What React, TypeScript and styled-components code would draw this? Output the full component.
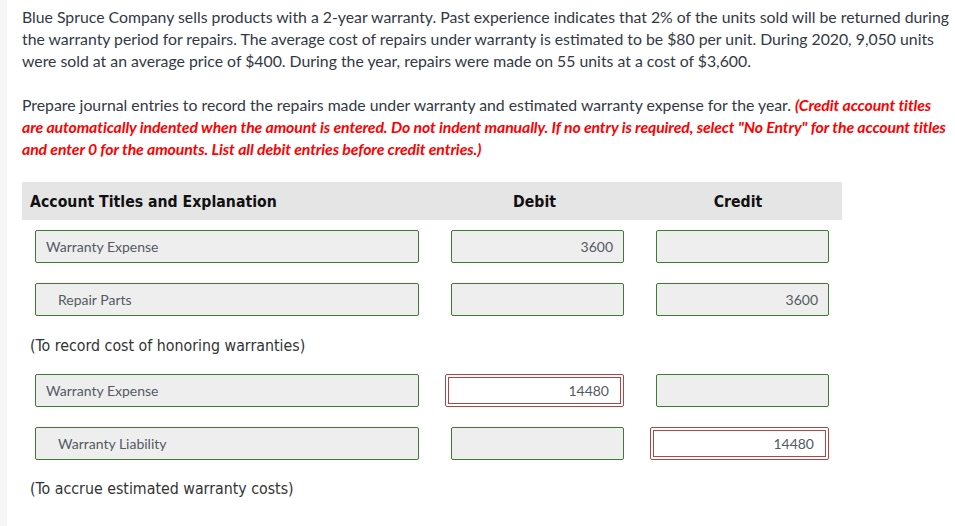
import React, { FC } from 'react';
import styled, { createGlobalStyle } from 'styled-components';

const GlobalStyle = createGlobalStyle`
  html, body {
    margin: 0;
    padding: 0;
    background: #ffffff;
  }
  body {
    font-family: Lato, "Open Sans", sans-serif;
  }
`;

const Page = styled.div`
  min-height: 526px;
  border-left: 7px solid #f6f6f6;
  padding: 6px 0 0 15px;
  box-sizing: border-box;
`;

const Question = styled.p`
  width: 932px;
  margin: 0 0 22px 0;
  font-size: 15.8px;
  line-height: 22px;
  color: #333845;
`;

const Warning = styled.span`
  color: #ff0000;
  font-weight: bold;
  font-style: italic;
  letter-spacing: -0.1px;
`;

const Table = styled.div`
  width: 820px;
  margin-top: 22px;
  display: grid;
  grid-template-columns: 413px 205px 202px;
`;

const HeadCell = styled.div<{ center?: boolean }>`
  height: 38px;
  background: #e5e5e5;
  display: flex;
  align-items: center;
  justify-content: ${p => (p.center ? 'center' : 'flex-start')};
  padding-left: ${p => (p.center ? '0' : '8px')};
  padding-right: ${p => (p.center ? '6px' : '0')};
  font-family: "DejaVu Sans Condensed", "DejaVu Sans", sans-serif;
  font-size: 15.7px;
  font-weight: bold;
  color: #111111;
`;

const Cell = styled.div<{ account?: boolean }>`
  display: flex;
  align-items: center;
  padding-left: ${p => (p.account ? '13px' : '16px')};
  height: 33px;
`;

const RowGap = styled.div<{ h: number }>`
  grid-column: 1 / -1;
  height: ${p => p.h}px;
`;

const Field = styled.div<{ width: number; indent?: boolean; right?: boolean; wrong?: boolean }>`
  box-sizing: border-box;
  position: relative;
  width: ${p => (p.wrong ? p.width + 6 : p.width)}px;
  margin-left: ${p => (p.wrong ? '-6px' : '0')};
  height: 33px;
  display: flex;
  align-items: center;
  justify-content: ${p => (p.right ? 'flex-end' : 'flex-start')};
  padding: 0 ${p => (p.wrong ? '14px' : '10px')} 0 ${p => (p.indent ? '22px' : '10px')};
  background: ${p => (p.wrong ? '#ffffff' : '#eeeeee')};
  border: 1px solid ${p => (p.wrong ? '#b04545' : '#3f7a35')};
  border-radius: 2px;
  font-size: 14px;
  color: #555a63;

  ${p =>
    p.wrong &&
    `
    &::after {
      content: '';
      position: absolute;
      inset: 2px;
      border: 1px solid #b04545;
      pointer-events: none;
    }
  `}
`;

const Note = styled.div`
  grid-column: 1 / -1;
  padding-left: 8px;
  font-family: "DejaVu Sans Condensed", "DejaVu Sans", sans-serif;
  font-size: 15.8px;
  line-height: 20px;
  color: #333333;
`;

type Entry = {
  account: string;
  credit?: boolean;
  debit?: string;
  creditAmt?: string;
  wrongDebit?: boolean;
  wrongCredit?: boolean;
};

const blocks: { rows: Entry[]; note: string }[] = [
  {
    rows: [
      { account: 'Warranty Expense', debit: '3600' },
      { account: 'Repair Parts', credit: true, creditAmt: '3600' },
    ],
    note: '(To record cost of honoring warranties)',
  },
  {
    rows: [
      { account: 'Warranty Expense', debit: '14480', wrongDebit: true },
      { account: 'Warranty Liability', credit: true, creditAmt: '14480', wrongCredit: true },
    ],
    note: '(To accrue estimated warranty costs)',
  },
];

const App: FC = () => {
  return (
    <Page>
      <GlobalStyle />
      <Question>
        Blue Spruce Company sells products with a 2-year warranty. Past experience indicates that 2% of the units
        sold will be returned during the warranty period for repairs. The average cost of repairs under warranty is
        estimated to be $80 per unit. During 2020, 9,050 units were sold at an average price of $400. During the
        year, repairs were made on 55 units at a cost of $3,600.
      </Question>
      <Question>
        Prepare journal entries to record the repairs made under warranty and estimated warranty expense for the
        year.{' '}
        <Warning>
          (Credit account titles are automatically indented when the amount is entered. Do not indent manually. If
          no entry is required, select "No Entry" for the account titles and enter 0 for the amounts. List all debit
          entries before credit entries.)
        </Warning>
      </Question>

      <Table>
        <HeadCell>Account Titles and Explanation</HeadCell>
        <HeadCell center>Debit</HeadCell>
        <HeadCell center>Credit</HeadCell>

        {blocks.map((block, bi) => (
          <React.Fragment key={bi}>
            {block.rows.map((row, ri) => (
              <React.Fragment key={ri}>
                <RowGap h={ri === 0 ? (bi === 0 ? 10 : 18) : 20} />
                <Cell account>
                  <Field width={384} indent={row.credit}>
                    {row.account}
                  </Field>
                </Cell>
                <Cell>
                  <Field width={173} right wrong={row.wrongDebit}>
                    {row.debit}
                  </Field>
                </Cell>
                <Cell>
                  <Field width={173} right wrong={row.wrongCredit}>
                    {row.creditAmt}
                  </Field>
                </Cell>
              </React.Fragment>
            ))}
            <RowGap h={bi === 0 ? 20 : 19} />
            <Note>{block.note}</Note>
          </React.Fragment>
        ))}
      </Table>
    </Page>
  );
};

export default App;
